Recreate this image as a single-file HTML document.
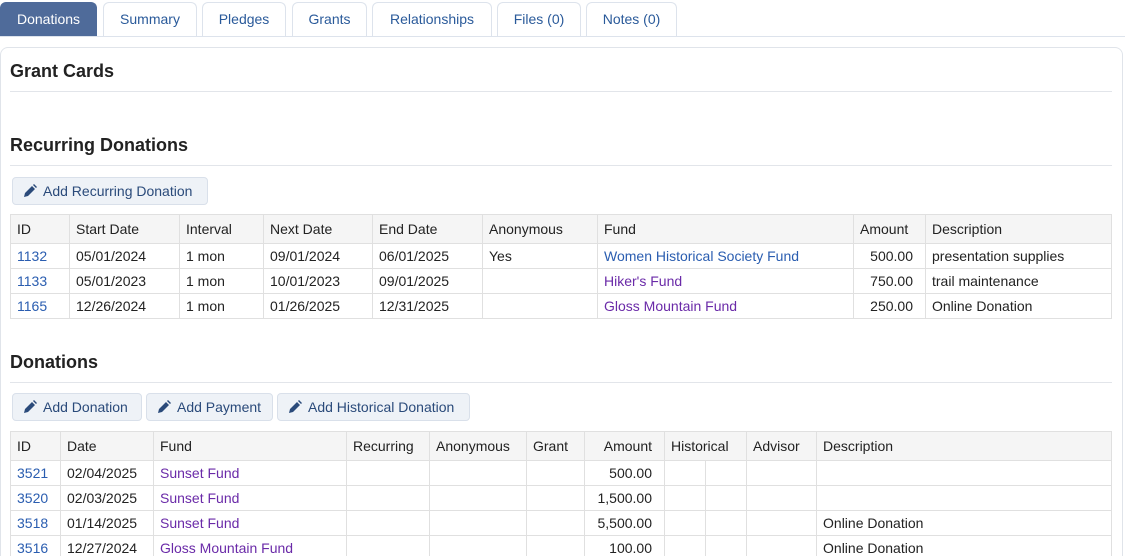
<!DOCTYPE html>
<html><head><meta charset="utf-8"><style>
*{box-sizing:border-box;margin:0;padding:0}
html,body{width:1125px;height:556px;overflow:hidden}
body{background:#fff;font-family:"Liberation Sans","DejaVu Sans",sans-serif;font-size:14px;color:#222;position:relative}
.tab{position:absolute;top:2px;height:35px;border:1px solid #dde3ec;border-bottom:none;border-radius:6px 6px 0 0;color:#2a5a9a;text-align:center;line-height:33px;font-size:14px;background:#fff}
.tab.act{background:#4f6b9a;color:#fff;border-color:#4f6b9a}
.tabline{position:absolute;top:36px;left:0;width:1125px;height:1px;background:#dde3ec}
.card{position:absolute;top:47px;left:0;width:1123px;height:520px;border:1px solid #e0e4ea;border-radius:8px}
h2{position:absolute;left:10px;font-size:18px;font-weight:bold;color:#222}
.hr{position:absolute;left:10px;width:1102px;height:1px;background:#e2e5ea}
.btn{position:absolute;height:28px;border:1px solid #d9e0ea;background:#eef2f7;border-radius:4px;color:#2a4a7a;font-size:14px;line-height:26px;padding-left:30px}
.btn svg{position:absolute;left:10px;top:6px}
table{position:absolute;left:10px;border-collapse:collapse;table-layout:fixed;width:1102px}
td,th{border:1px solid #e0e0e0;height:25px;padding:0 6px;font-weight:normal;text-align:left;white-space:nowrap;overflow:hidden;font-size:14px}
th{background:#f5f5f5;height:29px}
.r{text-align:right;padding-right:12px}
.l{color:#2a5db0}.f{color:#6a2aa8}
</style></head><body>
<div class="tab act" style="left:0;width:97px">Donations</div>
<div class="tab" style="left:103px;width:94px">Summary</div>
<div class="tab" style="left:202px;width:84px">Pledges</div>
<div class="tab" style="left:292px;width:75px">Grants</div>
<div class="tab" style="left:372px;width:120px">Relationships</div>
<div class="tab" style="left:497px;width:84px">Files (0)</div>
<div class="tab" style="left:586px;width:91px">Notes (0)</div>
<div class="tabline"></div>
<div class="card"></div>
<h2 style="top:61px">Grant Cards</h2>
<div class="hr" style="top:91px"></div>
<h2 style="top:135px">Recurring Donations</h2>
<div class="hr" style="top:165px"></div>
<div class="btn" style="left:12px;top:177px;width:196px"><svg width="14" height="14" viewBox="0 0 14 14"><path d="M1 13l1-4 7-7 3 3-7 7z M10 1l1-1 3 3-1 1z" fill="#2a4a7a"/></svg>Add Recurring Donation</div>
<table style="top:214px">
<colgroup><col style="width:59px"><col style="width:110px"><col style="width:84px"><col style="width:109px"><col style="width:110px"><col style="width:115px"><col style="width:256px"><col style="width:72px"><col></colgroup>
<tr><th>ID</th><th>Start Date</th><th>Interval</th><th>Next Date</th><th>End Date</th><th>Anonymous</th><th>Fund</th><th>Amount</th><th>Description</th></tr>
<tr><td class="l">1132</td><td>05/01/2024</td><td>1 mon</td><td>09/01/2024</td><td>06/01/2025</td><td>Yes</td><td class="l">Women Historical Society Fund</td><td class="r">500.00</td><td>presentation supplies</td></tr>
<tr><td class="l">1133</td><td>05/01/2023</td><td>1 mon</td><td>10/01/2023</td><td>09/01/2025</td><td></td><td class="f">Hiker's Fund</td><td class="r">750.00</td><td>trail maintenance</td></tr>
<tr><td class="l">1165</td><td>12/26/2024</td><td>1 mon</td><td>01/26/2025</td><td>12/31/2025</td><td></td><td class="f">Gloss Mountain Fund</td><td class="r">250.00</td><td>Online Donation</td></tr>
</table>
<h2 style="top:352px">Donations</h2>
<div class="hr" style="top:382px"></div>
<div class="btn" style="left:12px;top:393px;width:130px"><svg width="14" height="14" viewBox="0 0 14 14"><path d="M1 13l1-4 7-7 3 3-7 7z M10 1l1-1 3 3-1 1z" fill="#2a4a7a"/></svg>Add Donation</div>
<div class="btn" style="left:146px;top:393px;width:127px"><svg width="14" height="14" viewBox="0 0 14 14"><path d="M1 13l1-4 7-7 3 3-7 7z M10 1l1-1 3 3-1 1z" fill="#2a4a7a"/></svg>Add Payment</div>
<div class="btn" style="left:277px;top:393px;width:193px"><svg width="14" height="14" viewBox="0 0 14 14"><path d="M1 13l1-4 7-7 3 3-7 7z M10 1l1-1 3 3-1 1z" fill="#2a4a7a"/></svg>Add Historical Donation</div>
<table style="top:431px">
<colgroup><col style="width:50px"><col style="width:93px"><col style="width:193px"><col style="width:83px"><col style="width:97px"><col style="width:58px"><col style="width:80px"><col style="width:41px"><col style="width:41px"><col style="width:70px"><col></colgroup>
<tr><th>ID</th><th>Date</th><th>Fund</th><th>Recurring</th><th>Anonymous</th><th>Grant</th><th class="r">Amount</th><th colspan="2">Historical</th><th>Advisor</th><th>Description</th></tr>
<tr><td class="l">3521</td><td>02/04/2025</td><td class="f">Sunset Fund</td><td></td><td></td><td></td><td class="r">500.00</td><td></td><td></td><td></td><td></td></tr>
<tr><td class="l">3520</td><td>02/03/2025</td><td class="f">Sunset Fund</td><td></td><td></td><td></td><td class="r">1,500.00</td><td></td><td></td><td></td><td></td></tr>
<tr><td class="l">3518</td><td>01/14/2025</td><td class="f">Sunset Fund</td><td></td><td></td><td></td><td class="r">5,500.00</td><td></td><td></td><td></td><td>Online Donation</td></tr>
<tr><td class="l">3516</td><td>12/27/2024</td><td class="f">Gloss Mountain Fund</td><td></td><td></td><td></td><td class="r">100.00</td><td></td><td></td><td></td><td>Online Donation</td></tr>
</table>
</body></html>
